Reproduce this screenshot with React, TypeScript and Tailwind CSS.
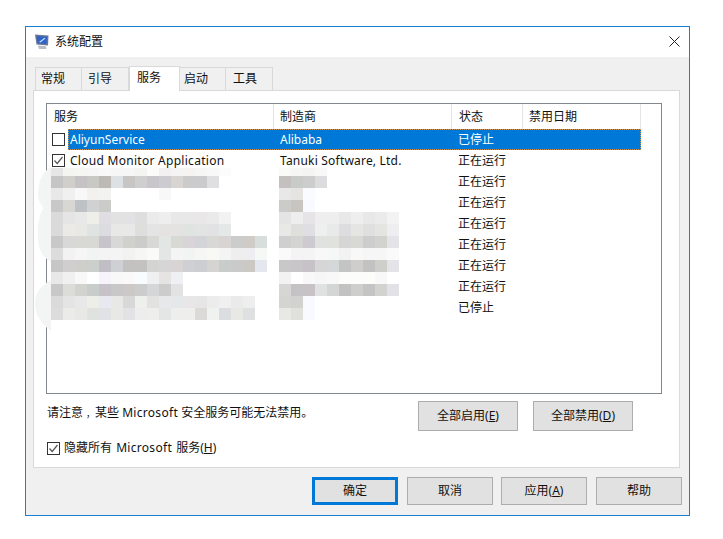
import React from "react";

const M: [number, number, number, string][] = [
  [168, 8, 51, "e6e6e6 f4f4f0 f5f5f2 f6f6f6 f8f8f8 f6f6f6 f6f6f6 f4f4f2 fbfbf8 f2f0f0 f4f4f4 f6f4f2 f6f6f4 f8f8f8 fbfbfb"],
  [168, 8, 279, "fafaf6 f6f6f4 f4f4f2 f8f8f8"],
  [176, 12, 51, "c5c5c5 d0cfcc c5c3c5 c8c8c4 bdb9b4 dde1e4 c8c6c4 cfcfcf c8c6ca ccccd0 d8d4d2 cbcbcb cbcbcd dfdfe1"],
  [176, 12, 279, "c5c0c0 c8cbc8 cdcdcd dcdcdf"],
  [188, 12, 51, "e8e8e8 f0f0f0 f8f8f8 f3f0f0 f2f3f0 ffffff ffffff ffffff ffffff f8f8f8"],
  [188, 12, 279, "e8e8e8 e5e4e0 fafbff"],
  [200, 12, 51, "c8c8c8 d8d7d3 bfc2c5 cfd1d3 cbcbc9"],
  [200, 12, 279, "cbcbc9 c8c4c0 f8faff"],
  [212, 12, 51, "dadada e5e5e5 e8e8e8 eeefe8 e0dee2 e2e2e2 e2e2e4 dedede ebebeb eeeeee e8e8e8 e8e8e8 e9e7e8 eaeaea f2f2f2"],
  [212, 12, 279, "e4e4e4 eeeeee e6e4e6 eeeeee eeeeee e8e8e8 eeeeee e8e8e8 ebebeb f3f3f3"],
  [224, 12, 51, "dadada ebeae6 e8e8e4 dfe3e1 dcdce0 e8e8e6 e8e8e8 dededc e4e4e4 e5e3e1 e5e3e1 e0e4e0 e2e4e4 e2e2e4 e4e8e6"],
  [224, 12, 279, "e8e8e6 dfdfdb dfdfe3 eef0f0 e8eaea dddddf e5e5e3 dfdfdf e4e4e0 eeeef0"],
  [236, 12, 51, "c8c8c8 d8d8d8 d8d8d4 d8d8d4 c8c4cc d8d8d8 d0d0cc ccccca d8d8d4 e2e6e4 d8d8d4 d8d4d8 d2d4d8 d8d8d4 d8d4d4 cbcccc cfccc8 d8dedc"],
  [236, 12, 279, "cfcfcf d4d4d2 cdcbcf e0e2e0 e0e2de d6d6d6 d8d8d4 cdcdcd d2d2ce e4e4e8"],
  [248, 12, 51, "dcdcdc f2f2f2 f6f6f6 f2f4f4 f4f4f4 f4f4f4 f2f2f0 f6f6f4 fafaf8 e4e6e6 f4f4f4 f2f4f4 f6f6f4 f8f8f4 f4f4f4 eeeeee eeeef2 f6f8f6"],
  [248, 12, 279, "fafafa f4f4f4 f4f4f4 f8f8f8 f6f8f8 f2f2f2 f8f8f8 f6f6f6 f6f6f6 fafafa"],
  [260, 12, 51, "c6c6c6 d0cece cececa ccd0cc c2bec6 ced0d4 c4c2c0 c4c2c0 d4d4d2 d6d6d6 d8d4d4 ced0d4 ccced2 d6d4d2 c8ccca cacaca ccc8c4 e4e8ee"],
  [260, 12, 279, "c8c8c8 c8c6c8 c6c2c8 d6d6d6 d4d8d8 c4c4c4 d0cecc c2c2c2 cececa e4e4e8"],
  [272, 12, 51, "e8e8e8 f0f0f0 f8f8f8 ffffff f6f4fa f8f8f8 fbf8fa f8fcfe f0f0f0 e6e4e2 eef0f4"],
  [272, 12, 279, "f2f2f2 ffffff f8f8f8 f6f6f6 f8f8f8 fcfcfa fcfcfa fcfcf8 f8f8f8 ffffff"],
  [284, 12, 51, "c8c8c8 dcdcd8 d2d2ce c8ccca c6c2c8 c8c8c8 ccc8c8 cccccc d4d6d8 cccccc e2e2e2"],
  [284, 12, 279, "d6d6d4 c4c2c4 c6c2c6 e0e2e2 d4d6d6 c2c2c2 cececc c4c4c4 d2d2d0 e2e2e6"],
  [296, 12, 51, "dadada e4e4e4 e8e8e8 eeeee8 e8e8f0 e8e8e6 d8d8d8 eef0ee e2e2e0 e6e8ea e4e8e8 e8e6e6 e6e6e6 ececec f0f0f0 eaeaea eeeeee"],
  [296, 12, 279, "d4d4d2 d2d2ce f8faff"],
  [308, 12, 51, "dcdcdc ebebe8 e8e8e6 e0e2e0 e0e2e6 e8e8e6 e2e2e4 ecedec eeeeec e4e6e6 eeeeec eeeeec dcdad6 f0f2f0 dcdde0 e8e8e4 dfe0e2"],
  [308, 12, 279, "e8e8e4 e0e0dc f8faff"],
];

function Mosaic() {
  return (
    <svg className="absolute left-0 top-0 pointer-events-none" width={723} height={539}>
      <path d="M51 167C44 171 38 179 38 194C38 202 42 205 43 208C38 218 37 230 38 240C39 252 44 258 51 262Z" fill="#f3f5f4" />
      <path d="M51 280C42 285 35 292 35 303C35 315 42 325 51 331Z" fill="#f3f5f4" />
      {M.flatMap(([y, h, x, cs]) =>
        cs.split(" ").map((c, i) => <rect key={`${y}-${x}-${i}`} x={x + i * 12} y={y} width={12} height={h} fill={`#${c}`} />)
      )}
    </svg>
  );
}

function Check({ on }: { on?: boolean }) {
  return (
    <span className="flex h-[13px] w-[13px] shrink-0 items-center justify-center border border-[#333333] bg-white">
      {on && (
        <svg width="11" height="11" viewBox="0 0 11 11">
          <path d="M1.5 5.5L4.2 8.5L9.5 2" fill="none" stroke="#555555" strokeWidth="1.2" />
        </svg>
      )}
    </span>
  );
}

function Btn({ children, w = "w-[86px]", h = "h-[28px]" }: { children: React.ReactNode; w?: string; h?: string }) {
  return (
    <div className={`flex ${w} ${h} items-center justify-center border border-[#adadad] bg-[#e1e1e1] text-[#111111]`}>
      {children}
    </div>
  );
}

const tabs = [
  { t: "常规", cls: "w-[47px] pl-[5px] border-l" },
  { t: "引导", cls: "w-[47px] pl-[6px]" },
  { t: "服务", cls: "w-[51px] pl-[7px]", active: true },
  { t: "启动", cls: "w-[46px] pl-[4px]" },
  { t: "工具", cls: "w-[47px] pl-[7px]" },
];

const statuses = ["正在运行", "正在运行", "正在运行", "正在运行", "正在运行", "正在运行", "已停止"];

export default function App() {
  return (
    <div className="relative h-[539px] w-[723px] overflow-hidden bg-white pl-[25px] pt-[26px] font-['Noto_Sans','Noto_Sans_CJK_SC',sans-serif] text-[12px] leading-[16px] text-[#111111]">
      <div className="flex h-[490px] w-[665px] flex-col border border-[#1a7fd0] bg-[#f0f0f0]">
        {/* title bar */}
        <div className="flex h-[30px] shrink-0 items-center bg-white pl-[8px] pr-[9px]">
          <svg width="16" height="16" viewBox="0 0 16 16" className="-mt-[1px] shrink-0">
            <path d="M1 0.5L14.5 1.5L14 11.5L2.5 10.5Z" fill="#6b7892" />
            <path d="M2.5 2L13 2.8L12.6 10L3.6 9.2Z" fill="#2f62c9" />
            <path d="M5 8L10.5 3.8L11.5 4.4L6.5 8.6Z" fill="#c4daf6" />
            <path d="M4 11.5L12 12.2L12.5 15L5 15Z" fill="#b9bec6" />
          </svg>
          <span className="ml-[5px]">系统配置</span>
          <svg width="11" height="11" viewBox="0 0 11 11" className="-mt-[2px] ml-auto">
            <path d="M0.5 0.5L10.5 10.5M10.5 0.5L0.5 10.5" stroke="#222222" strokeWidth="1" fill="none" />
          </svg>
        </div>
        {/* tabs */}
        <div className="flex h-[33px] shrink-0 items-end pl-[9px]">
          {tabs.map((tb) =>
            tb.active ? (
              <div
                key={tb.t}
                className={`relative z-10 -mb-[1px] flex h-[25px] ${tb.cls} border border-b-0 border-[#d9d9d9] bg-white pt-[3px]`}
              >
                {tb.t}
              </div>
            ) : (
              <div
                key={tb.t}
                className={`flex h-[23px] ${tb.cls} items-center border-t border-r border-[#d9d9d9] bg-[#f0f0f0]`}
              >
                {tb.t}
              </div>
            )
          )}
        </div>
        {/* panel */}
        <div className="ml-[7px] mr-[9px] flex h-[378px] w-[647px] shrink-0 flex-col border border-[#d9d9d9] bg-white pl-[12px] pt-[12px]">
          <div className="h-[291px] w-[616px] shrink-0 border border-[#828790] bg-white">
            <div className="grid h-[25px] w-[594px] grid-cols-[227px_178px_71px_118px] items-center">
              {[
                ["服务", "pl-[7px]"],
                ["制造商", "pl-[6px]"],
                ["状态", "pl-[7px]"],
                ["禁用日期", "pl-[6px]"],
              ].map(([t, p]) => (
                <div key={t} className={`flex h-full items-center border-r border-[#e5e5e5] ${p}`}>
                  {t}
                </div>
              ))}
            </div>
            <div className="flex h-[21px] w-[594px] items-center pl-[5px]">
              <Check />
              <div className="ml-[3px] grid h-full flex-1 grid-cols-[204px_178px_71px_118px] items-center border border-dotted border-[#c9935a] bg-[#0078d7] text-white">
                <div className="pl-[1px]">AliyunService</div>
                <div className="pl-[7px]">Alibaba</div>
                <div className="pl-[7px]">已停止</div>
                <div />
              </div>
            </div>
            <div className="flex h-[21px] w-[594px] items-center pl-[5px]">
              <Check on />
              <div className="ml-[3px] grid h-full flex-1 grid-cols-[205px_178px_71px_119px] items-center">
                <div className="pl-[2px] tracking-[0.28px]">Cloud Monitor Application</div>
                <div className="pl-[7px] tracking-[0.2px]">Tanuki Software, Ltd.</div>
                <div className="pl-[7px]">正在运行</div>
                <div />
              </div>
            </div>
            {statuses.map((s, i) => (
              <div key={i} className="flex h-[21px] w-[594px] items-center pl-[411px]">
                {s}
              </div>
            ))}
          </div>
          <div className="flex h-[37px] w-[616px] shrink-0 items-end">
            <div className="ml-[1px] self-center whitespace-nowrap pt-[1px]">
              请注意<span className="inline-block w-[12px] pl-[3px] text-[9px]">，</span>某些 <span className="tracking-[0.3px]">Microsoft</span> 安全服务可能无法禁用。
            </div>
            <div className="ml-auto flex gap-[15px] self-end pr-[29px]">
              <Btn w="w-[100px]" h="h-[30px]">
                <span>全部启用(<span className="underline">E</span>)</span>
              </Btn>
              <Btn w="w-[100px]" h="h-[30px]">
                <span>全部禁用(<span className="underline">D</span>)</span>
              </Btn>
            </div>
          </div>
          <div className="mt-[9px] flex items-center gap-[4px] pl-[1px]">
            <Check on />
            <span>
              隐藏所有 <span className="mx-[1px] tracking-[0.3px]">Microsoft</span> 服务(<span className="underline">H</span>)
            </span>
          </div>
        </div>
        {/* footer */}
        <div className="mt-[9px] flex pl-[286px]">
          <div className="flex h-[28px] w-[86px] items-center justify-center border-[3px] border-[#0078d7] bg-[#e1e1e1]">确定</div>
          <div className="ml-[9px]"><Btn>取消</Btn></div>
          <div className="ml-[8px]"><Btn><span>应用(<span className="underline">A</span>)</span></Btn></div>
          <div className="ml-[9px]"><Btn>帮助</Btn></div>
        </div>
      </div>
      <Mosaic />
    </div>
  );
}
